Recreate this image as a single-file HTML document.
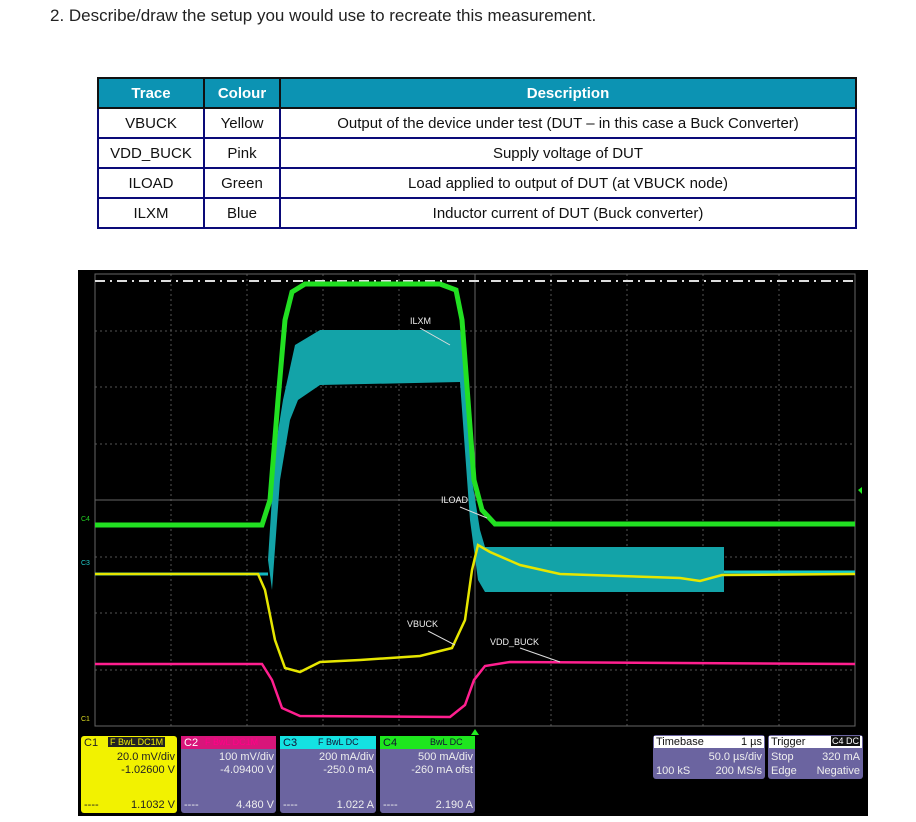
<!DOCTYPE html>
<html><head><meta charset="utf-8"><style>
body{margin:0;width:916px;height:822px;background:#fff;position:relative;overflow:hidden;font-family:"Liberation Sans",sans-serif}
.q{position:absolute;left:50px;top:6px;font-size:17px;color:#222}
table{position:absolute;left:97px;top:77px;border-collapse:collapse;font-size:15px;color:#111}
td,th{border:2px solid #0a0a78;text-align:center;height:28px;padding:0}
th{background:#0c93b3;color:#fff;border-color:#111;font-size:15px}
.scope{position:absolute;left:78px;top:270px;width:790px;height:546px;background:#000}
.p{position:absolute;top:736px;height:77px;background:#6b64a0;border-radius:3px;font-size:11px;color:#eee}
.p div{position:absolute;white-space:nowrap}
</style></head><body>
<div class="q">2. Describe/draw the setup you would use to recreate this measurement.</div>
<table>
<tr><th style="width:104px">Trace</th><th style="width:74px">Colour</th><th style="width:574px">Description</th></tr>
<tr><td>VBUCK</td><td>Yellow</td><td>Output of the device under test (DUT – in this case a Buck Converter)</td></tr>
<tr><td>VDD_BUCK</td><td>Pink</td><td>Supply voltage of DUT</td></tr>
<tr><td>ILOAD</td><td>Green</td><td>Load applied to output of DUT (at VBUCK node)</td></tr>
<tr><td>ILXM</td><td>Blue</td><td>Inductor current of DUT (Buck converter)</td></tr>
</table>
<div class="scope"></div>
<svg style="position:absolute;left:0;top:0" width="916" height="822">
<g stroke="#555" stroke-width="1" stroke-dasharray="2,3" fill="none">
<line x1="95" y1="331" x2="855" y2="331"/><line x1="95" y1="387" x2="855" y2="387"/><line x1="95" y1="444" x2="855" y2="444"/><line x1="95" y1="500" x2="855" y2="500"/><line x1="95" y1="557" x2="855" y2="557"/><line x1="95" y1="613" x2="855" y2="613"/><line x1="95" y1="670" x2="855" y2="670"/>
<line x1="171" y1="274" x2="171" y2="726"/><line x1="247" y1="274" x2="247" y2="726"/><line x1="323" y1="274" x2="323" y2="726"/><line x1="399" y1="274" x2="399" y2="726"/><line x1="551" y1="274" x2="551" y2="726"/><line x1="627" y1="274" x2="627" y2="726"/><line x1="703" y1="274" x2="703" y2="726"/><line x1="779" y1="274" x2="779" y2="726"/>
</g>
<g stroke="#666" fill="none"><rect x="95" y="274" width="760" height="452"/><line x1="475" y1="274" x2="475" y2="726"/><line x1="95" y1="500" x2="855" y2="500"/></g>
<line x1="95" y1="281" x2="855" y2="281" stroke="#ddd" stroke-width="2" stroke-dasharray="10,5,2,5"/>
<polygon fill="#13a3a8" points="268,560 275,450 283,400 295,345 320,330 460,330 466,360 472,480 480,530 485,547 724,547 724,592 485,592 478,580 470,520 460,382 320,385 298,400 290,420 280,480 272,590"/>
<polyline fill="none" stroke="#13b8c0" stroke-width="3" points="95,574 268,574"/><polyline fill="none" stroke="#13cccc" stroke-width="3" points="724,572 855,572"/>
<polyline fill="none" stroke="#22e022" stroke-width="5" points="95,525 262,525 270,500 278,400 285,320 292,292 305,284 440,284 456,290 462,320 468,400 474,480 482,510 495,524 855,524"/>
<polyline fill="none" stroke="#e6e600" stroke-width="2.5" points="95,574 258,574 265,590 275,640 285,668 300,672 320,662 360,660 420,656 452,648 465,620 472,570 478,545 490,552 520,565 560,574 620,576 680,578 700,581 722,575 855,574"/>
<polyline fill="none" stroke="#ff1f8f" stroke-width="2.5" points="95,664 262,664 272,680 282,708 300,716 450,717 465,705 474,680 485,666 510,662 855,664"/>
<g font-size="9" fill="#eee"><text x="410" y="324">ILXM</text><text x="441" y="503">ILOAD</text><text x="407" y="627">VBUCK</text><text x="490" y="645">VDD_BUCK</text></g>
<g stroke="#ddd" stroke-width="1"><line x1="420" y1="328" x2="450" y2="345"/><line x1="460" y1="507" x2="487" y2="518"/><line x1="428" y1="631" x2="455" y2="645"/><line x1="520" y1="648" x2="560" y2="662"/></g>
<polygon points="858,490 862,487 862,494" fill="#2e2"/><polygon points="475,729 471,735 479,735" fill="#2e2"/>
<g font-size="7"><text x="81" y="521" fill="#2c2">C4</text><text x="81" y="565" fill="#2cc">C3</text><text x="81" y="721" fill="#dd2">C1</text></g>
</svg>
<div class="p" style="left:81px;width:96px;background:#f2f200;color:#222"><div style="left:3px;top:1px">C1</div><div style="left:27px;top:1px;font-size:9px;background:#222;color:#ee0;padding:0 2px">F BwL DC1M</div><div style="right:2px;top:15px">20.0 mV/div</div><div style="right:2px;top:28px">-1.02600 V</div><div style="left:3px;bottom:2px">----</div><div style="right:2px;bottom:2px">1.1032 V</div></div>
<div class="p" style="left:181px;width:95px"><div style="left:0;top:0;width:95px;height:13px;background:#d8157a"></div><div style="left:3px;top:1px;color:#fff">C2</div><div style="left:24px;top:1px;font-size:9px;color:#f08">F BwL DC1M</div><div style="right:2px;top:15px">100 mV/div</div><div style="right:2px;top:28px">-4.09400 V</div><div style="left:3px;bottom:2px">----</div><div style="right:2px;bottom:2px">4.480 V</div></div>
<div class="p" style="left:280px;width:96px"><div style="left:0;top:0;width:96px;height:13px;background:#14e2e2"></div><div style="left:3px;top:1px;color:#113">C3</div><div style="left:38px;top:1px;font-size:9px;color:#113">F BwL DC</div><div style="right:2px;top:15px">200 mA/div</div><div style="right:2px;top:28px">-250.0 mA</div><div style="left:3px;bottom:2px">----</div><div style="right:2px;bottom:2px">1.022 A</div></div>
<div class="p" style="left:380px;width:95px"><div style="left:0;top:0;width:95px;height:13px;background:#1ee61e"></div><div style="left:3px;top:1px;color:#113">C4</div><div style="left:50px;top:1px;font-size:9px;color:#113">BwL DC</div><div style="right:2px;top:15px">500 mA/div</div><div style="right:2px;top:28px">-260 mA ofst</div><div style="left:3px;bottom:2px">----</div><div style="right:2px;bottom:2px">2.190 A</div></div>
<div class="p" style="left:653px;top:735px;width:112px;height:44px"><div style="left:1px;top:1px;width:110px;height:12px;background:#fff"></div><div style="left:3px;top:1px;color:#111">Timebase</div><div style="right:3px;top:1px;color:#111">1 µs</div><div style="right:3px;top:16px">50.0 µs/div</div><div style="left:3px;top:30px">100 kS</div><div style="right:3px;top:30px">200 MS/s</div></div>
<div class="p" style="left:768px;top:735px;width:95px;height:44px"><div style="left:1px;top:1px;width:93px;height:12px;background:#fff"></div><div style="left:3px;top:1px;color:#111">Trigger</div><div style="right:3px;top:1px;font-size:9px;background:#111;color:#fff;padding:0 1px">C4 DC</div><div style="left:3px;top:16px">Stop</div><div style="right:3px;top:16px">320 mA</div><div style="left:3px;top:30px">Edge</div><div style="right:3px;top:30px">Negative</div></div>
</body></html>
